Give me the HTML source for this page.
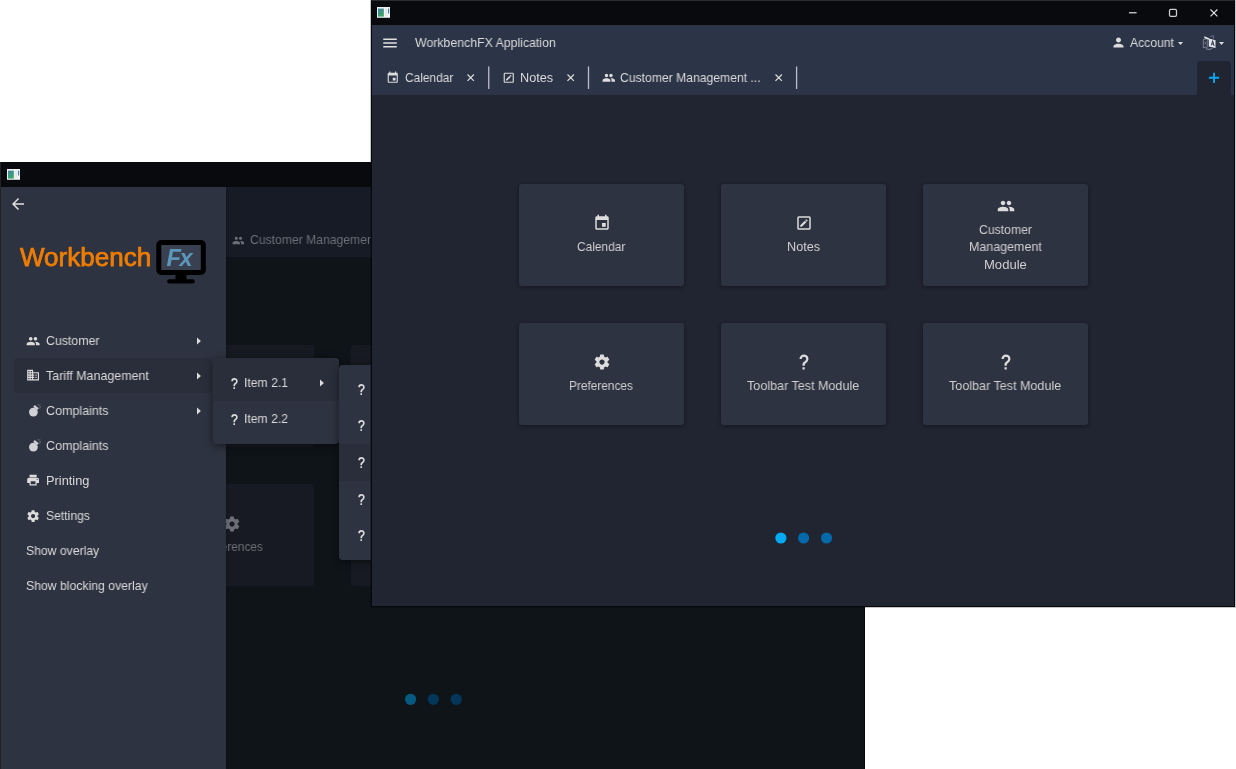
<!DOCTYPE html>
<html><head><meta charset="utf-8"><title>WorkbenchFX</title>
<style>
*{box-sizing:border-box;margin:0;padding:0}
html,body{width:1236px;height:769px;overflow:hidden;background:#fff}
body{position:relative;font-family:"Liberation Sans",sans-serif;font-size:12.4px;color:#d6d6d6}
.a{position:absolute}
.t{position:absolute;white-space:nowrap;line-height:20px;height:20px;will-change:transform;transform-origin:0 0}
svg{position:absolute;display:block}
.tile{position:absolute;width:165px;height:102px;border-radius:3px;background:#2e3341;box-shadow:0 1px 4px rgba(0,0,0,.38)}
.dtile{position:absolute;width:165px;height:102px;border-radius:3px;background:#171a22}
.sep{position:absolute;width:1.400px;top:66.300px;height:22.800px;background:#b3b8c3;border-radius:.7px}
.dot{position:absolute;width:11px;height:11px;border-radius:50%}
</style></head><body>

<!-- WINDOW 2 (back: dimmed + navigation drawer) -->
<div class="a" style="left:0;top:162px;width:865px;height:607px;background:#0f1419;overflow:hidden">
<div class="a" style="left:0;top:-162px;width:1236px;height:769px">
<div class="a" style="left:0px;top:162px;width:865px;height:25px;background:#080a0e;"></div>
<svg style="left:7px;top:169px" width="13.300" height="10.800" viewBox="0 0 13.600 11"><defs><linearGradient id="ag1" x1="0" y1="0" x2=".5" y2="1"><stop offset="0" stop-color="#4a7fb0"/><stop offset=".45" stop-color="#3f9488"/><stop offset="1" stop-color="#3ca468"/></linearGradient></defs><rect width="13.600" height="11" fill="#f3f5f5"/><rect x="1" y="1.600" width="6" height="8.200" fill="url(#ag1)"/><rect x="11.200" y="1.600" width="1.300" height="5" fill="#4a86aa"/><rect x="8.300" y="1.800" width="2.200" height="7.600" fill="#e3e7e7"/></svg>
<div class="a" style="left:0px;top:187px;width:865px;height:70px;background:#161b26;"></div>
<svg style="left:231.5px;top:233.5px" width="12.8" height="12.8" viewBox="0 0 24 24"><path fill="#6c6f75" d="M16 11c1.66 0 2.99-1.34 2.99-3S17.66 5 16 5c-1.66 0-3 1.34-3 3s1.34 3 3 3zm-8 0c1.66 0 2.99-1.34 2.99-3S9.66 5 8 5C6.34 5 5 6.34 5 8s1.34 3 3 3zm0 2c-2.33 0-7 1.17-7 3.5V19h14v-2.5c0-2.33-4.67-3.5-7-3.5zm8 0c-.29 0-.62.02-.97.05 1.16.84 1.97 1.97 1.97 3.45V19h6v-2.5c0-2.33-4.67-3.5-7-3.5z"/></svg>
<span class="t" id="t1" style="left:250.00px;top:230.00px;font-size:12.7px;color:#6c6f75;transform:scaleX(0.9588);">Customer Management ...</span>
<div class="dtile" style="left:148.5px;top:345px"></div>
<div class="dtile" style="left:148.5px;top:484px"></div>
<div class="dtile" style="left:350.5px;top:345px"></div>
<div class="dtile" style="left:350.5px;top:484px"></div>
<div class="dtile" style="left:552.5px;top:345px"></div>
<div class="dtile" style="left:552.5px;top:484px"></div>
<svg style="left:222.5px;top:514.5px" width="18" height="18" viewBox="0 0 24 24"><path fill="#6c6f75" d="M19.43 12.98c.04-.32.07-.64.07-.98s-.03-.66-.07-.98l2.11-1.65c.19-.15.24-.42.12-.64l-2-3.46c-.12-.22-.39-.3-.61-.22l-2.49 1c-.52-.4-1.08-.73-1.69-.98l-.38-2.65C14.46 2.18 14.25 2 14 2h-4c-.25 0-.46.18-.49.42l-.38 2.65c-.61.25-1.17.59-1.69.98l-2.49-1c-.23-.09-.49 0-.61.22l-2 3.46c-.13.22-.07.49.12.64l2.11 1.65c-.04.32-.07.65-.07.98s.03.66.07.98l-2.11 1.65c-.19.15-.24.42-.12.64l2 3.46c.12.22.39.3.61.22l2.49-1c.52.4 1.08.73 1.69.98l.38 2.65c.03.24.24.42.49.42h4c.25 0 .46-.18.49-.42l.38-2.65c.61-.25 1.17-.59 1.69-.98l2.49 1c.23.09.49 0 .61-.22l2-3.46c.12-.22.07-.49-.12-.64l-2.11-1.65zM12 15.5c-1.93 0-3.5-1.57-3.5-3.5s1.57-3.5 3.5-3.5 3.5 1.57 3.5 3.5-1.57 3.5-3.5 3.5z"/></svg>
<span class="t" id="t2" style="left:199.00px;top:537.00px;font-size:12.7px;color:#6c6f75;transform:scaleX(0.9344);">Preferences</span>
<svg style="left:400px;top:690px" width="70" height="20" viewBox="0 0 70 20"><circle cx="10.600" cy="9.300" r="5.600" fill="#065a82"/><circle cx="33.300" cy="9.300" r="5.600" fill="#04365a"/><circle cx="56.250" cy="9.300" r="5.600" fill="#04365a"/></svg>
<div class="a" style="left:0px;top:187px;width:226px;height:582px;background:#2e3341;box-shadow:1px 0 3px rgba(0,0,0,.2)"></div>
<svg style="left:9px;top:195px" width="18" height="18" viewBox="0 0 24 24"><path fill="#e0e0e0" d="M20 11H7.83l5.59-5.59L12 4l-8 8 8 8 1.41-1.41L7.83 13H20v-2z"/></svg>
<span class="t" id="logo" style="left:19.5px;top:236.500px;height:40px;line-height:40px;font-size:26px;letter-spacing:.03px;color:#ef7d00;-webkit-text-stroke:.75px #ef7d00">Workbench</span>
<svg id="mon" style="left:156px;top:239px" width="51" height="46" viewBox="0 0 51 46"><rect x="2.8" y="3.5" width="44.5" height="30" rx="2.5" fill="#39404f" stroke="#000" stroke-width="5"/><rect x="19.5" y="35" width="11" height="6" fill="#000"/><rect x="11.2" y="40.2" width="27.600" height="4.300" rx="2.100" fill="#000"/><text x="10.600" y="27.100" font-family="Liberation Sans, sans-serif" font-style="italic" font-weight="bold" font-size="23.700" fill="#5b95ba" letter-spacing="-1.600">Fx</text></svg>
<div class="a" style="left:14px;top:358px;width:198px;height:35px;background:#2a2e3b;border-radius:3px"></div>
<svg style="left:26.3px;top:334px" width="14.2" height="14.2" viewBox="0 0 24 24"><path fill="#dcdcdc" d="M16 11c1.66 0 2.99-1.34 2.99-3S17.66 5 16 5c-1.66 0-3 1.34-3 3s1.34 3 3 3zm-8 0c1.66 0 2.99-1.34 2.99-3S9.66 5 8 5C6.34 5 5 6.34 5 8s1.34 3 3 3zm0 2c-2.33 0-7 1.17-7 3.5V19h14v-2.5c0-2.33-4.67-3.5-7-3.5zm8 0c-.29 0-.62.02-.97.05 1.16.84 1.97 1.97 1.97 3.45V19h6v-2.5c0-2.33-4.67-3.5-7-3.5z"/></svg>
<span class="t" id="t3" style="left:46.00px;top:331.00px;font-size:12.7px;color:#dadada;transform:scaleX(0.9722);">Customer</span>
<svg style="left:196.5px;top:337.4px" width="4" height="8" viewBox="0 0 4 8"><path d="M0 .6L3.900 4.100 0 7.600z" fill="#dcdcdc"/></svg>
<svg style="left:26.1px;top:367.6px" width="14.2" height="14.2" viewBox="0 0 24 24"><path fill="#dcdcdc" d="M12 7V3H2v18h20V7H12zM6 19H4v-2h2v2zm0-4H4v-2h2v2zm0-4H4V9h2v2zm0-4H4V5h2v2zm4 12H8v-2h2v2zm0-4H8v-2h2v2zm0-4H8V9h2v2zm0-4H8V5h2v2zm10 12h-8v-2h2v-2h-2v-2h2v-2h-2V9h8v10zm-2-8h-2v2h2v-2zm0 4h-2v2h2v-2z"/></svg>
<span class="t" id="t4" style="left:46.00px;top:366.00px;font-size:12.7px;color:#dadada;transform:scaleX(0.9816);">Tariff Management</span>
<svg style="left:196.5px;top:372.4px" width="4" height="8" viewBox="0 0 4 8"><path d="M0 .6L3.900 4.100 0 7.600z" fill="#dcdcdc"/></svg>
<svg style="left:28px;top:403.5px" width="14" height="14" viewBox="0 0 14 14"><circle cx="5.4" cy="8.1" r="4.4" fill="#cfd1d6"/><path d="M6 1.9L10 5.2" stroke="#cfd1d6" stroke-width="2.3" fill="none"/><path d="M11 1.600l.9-1M11.500 2.900h1.500M11.200 3.900l1 .9M10.200 1.200v-1" stroke="#a9adb6" stroke-width=".6" fill="none"/></svg>
<span class="t" id="t5" style="left:46.00px;top:401.00px;font-size:12.7px;color:#dadada;transform:scaleX(0.9865);">Complaints</span>
<svg style="left:196.5px;top:407.4px" width="4" height="8" viewBox="0 0 4 8"><path d="M0 .6L3.900 4.100 0 7.600z" fill="#dcdcdc"/></svg>
<svg style="left:28px;top:438.5px" width="14" height="14" viewBox="0 0 14 14"><circle cx="5.4" cy="8.1" r="4.4" fill="#cfd1d6"/><path d="M6 1.9L10 5.2" stroke="#cfd1d6" stroke-width="2.3" fill="none"/><path d="M11 1.600l.9-1M11.500 2.900h1.500M11.200 3.900l1 .9M10.200 1.200v-1" stroke="#a9adb6" stroke-width=".6" fill="none"/></svg>
<span class="t" id="t6" style="left:46.00px;top:436.00px;font-size:12.7px;color:#dadada;transform:scaleX(0.9865);">Complaints</span>
<svg style="left:26.2px;top:473.2px" width="14.2" height="14.2" viewBox="0 0 24 24"><path fill="#dcdcdc" d="M19 8H5c-1.66 0-3 1.34-3 3v6h4v4h12v-4h4v-6c0-1.66-1.34-3-3-3zm-3 11H8v-5h8v5zm3-7c-.55 0-1-.45-1-1s.45-1 1-1 1 .45 1 1-.45 1-1 1zm-1-9H6v4h12V3z"/></svg>
<span class="t" id="t7" style="left:46.00px;top:471.00px;font-size:12.7px;color:#dadada;transform:scaleX(1.0078);">Printing</span>
<svg style="left:26.2px;top:508.7px" width="14.2" height="14.2" viewBox="0 0 24 24"><path fill="#dcdcdc" d="M19.43 12.98c.04-.32.07-.64.07-.98s-.03-.66-.07-.98l2.11-1.65c.19-.15.24-.42.12-.64l-2-3.46c-.12-.22-.39-.3-.61-.22l-2.49 1c-.52-.4-1.08-.73-1.69-.98l-.38-2.65C14.46 2.18 14.25 2 14 2h-4c-.25 0-.46.18-.49.42l-.38 2.65c-.61.25-1.17.59-1.69.98l-2.49-1c-.23-.09-.49 0-.61.22l-2 3.46c-.13.22-.07.49.12.64l2.11 1.65c-.04.32-.07.65-.07.98s.03.66.07.98l-2.11 1.65c-.19.15-.24.42-.12.64l2 3.46c.12.22.39.3.61.22l2.49-1c.52.4 1.08.73 1.69.98l.38 2.65c.03.24.24.42.49.42h4c.25 0 .46-.18.49-.42l.38-2.65c.61-.25 1.17-.59 1.69-.98l2.49 1c.23.09.49 0 .61-.22l2-3.46c.12-.22.07-.49-.12-.64l-2.11-1.65zM12 15.5c-1.93 0-3.5-1.57-3.5-3.5s1.57-3.5 3.5-3.5 3.5 1.57 3.5 3.5-1.57 3.5-3.5 3.5z"/></svg>
<span class="t" id="t8" style="left:46.00px;top:506.00px;font-size:12.7px;color:#dadada;transform:scaleX(0.9574);">Settings</span>
<span class="t" id="t9" style="left:26.00px;top:541.00px;font-size:12.7px;color:#dadada;transform:scaleX(0.9614);">Show overlay</span>
<span class="t" id="t10" style="left:26.00px;top:576.00px;font-size:12.7px;color:#dadada;transform:scaleX(0.9637);">Show blocking overlay</span>
<div class="a" style="left:213px;top:358px;width:126.300px;height:86px;border-radius:4px;background:#2e3341;box-shadow:0 2px 8px rgba(0,0,0,.5);overflow:hidden"><div class="a" style="left:0;top:0;width:126px;height:43px;background:#2a2e3b"></div></div>
<svg style="left:228px;top:376.5px" width="13" height="13" viewBox="0 0 24 24"><path fill="#dcdcdc" d="M10,19H13V22H10V19M12,2C17.35,2.22 19.68,7.62 16.5,11.67C15.67,12.67 14.33,13.33 13.67,14.17C13,15 13,16 13,17H10C10,15.33 10,13.92 10.67,12.92C11.33,11.92 12.67,11.33 13.5,10.67C15.92,8.43 15.32,5.26 12,5A3,3 0 0,0 9,8H6A6,6 0 0,1 12,2Z"/></svg>
<span class="t" id="t11" style="left:244.00px;top:373.00px;font-size:12.7px;color:#dadada;transform:scaleX(0.9608);">Item 2.1</span>
<svg style="left:319.6px;top:379.2px" width="4" height="8" viewBox="0 0 4 8"><path d="M0 .6L3.900 4.100 0 7.600z" fill="#dcdcdc"/></svg>
<svg style="left:228px;top:413.2px" width="13" height="13" viewBox="0 0 24 24"><path fill="#dcdcdc" d="M10,19H13V22H10V19M12,2C17.35,2.22 19.68,7.62 16.5,11.67C15.67,12.67 14.33,13.33 13.67,14.17C13,15 13,16 13,17H10C10,15.33 10,13.92 10.67,12.92C11.33,11.92 12.67,11.33 13.5,10.67C15.92,8.43 15.32,5.26 12,5A3,3 0 0,0 9,8H6A6,6 0 0,1 12,2Z"/></svg>
<span class="t" id="t12" style="left:244.00px;top:409.00px;font-size:12.7px;color:#dadada;transform:scaleX(0.9606);">Item 2.2</span>
<div class="a" style="left:339.300px;top:364.500px;width:160px;height:195.500px;border-radius:4px;background:#2e3341;box-shadow:0 2px 8px rgba(0,0,0,.5);overflow:hidden"><div class="a" style="left:0;top:79.500px;width:160px;height:36.700px;background:#2a2e3b"></div></div>
<svg style="left:354.7px;top:382.6px" width="13" height="13" viewBox="0 0 24 24"><path fill="#dcdcdc" d="M10,19H13V22H10V19M12,2C17.35,2.22 19.68,7.62 16.5,11.67C15.67,12.67 14.33,13.33 13.67,14.17C13,15 13,16 13,17H10C10,15.33 10,13.92 10.67,12.92C11.33,11.92 12.67,11.33 13.5,10.67C15.92,8.43 15.32,5.26 12,5A3,3 0 0,0 9,8H6A6,6 0 0,1 12,2Z"/></svg>
<svg style="left:354.7px;top:419.3px" width="13" height="13" viewBox="0 0 24 24"><path fill="#dcdcdc" d="M10,19H13V22H10V19M12,2C17.35,2.22 19.68,7.62 16.5,11.67C15.67,12.67 14.33,13.33 13.67,14.17C13,15 13,16 13,17H10C10,15.33 10,13.92 10.67,12.92C11.33,11.92 12.67,11.33 13.5,10.67C15.92,8.43 15.32,5.26 12,5A3,3 0 0,0 9,8H6A6,6 0 0,1 12,2Z"/></svg>
<svg style="left:354.7px;top:456.0px" width="13" height="13" viewBox="0 0 24 24"><path fill="#dcdcdc" d="M10,19H13V22H10V19M12,2C17.35,2.22 19.68,7.62 16.5,11.67C15.67,12.67 14.33,13.33 13.67,14.17C13,15 13,16 13,17H10C10,15.33 10,13.92 10.67,12.92C11.33,11.92 12.67,11.33 13.5,10.67C15.92,8.43 15.32,5.26 12,5A3,3 0 0,0 9,8H6A6,6 0 0,1 12,2Z"/></svg>
<svg style="left:354.7px;top:492.70000000000005px" width="13" height="13" viewBox="0 0 24 24"><path fill="#dcdcdc" d="M10,19H13V22H10V19M12,2C17.35,2.22 19.68,7.62 16.5,11.67C15.67,12.67 14.33,13.33 13.67,14.17C13,15 13,16 13,17H10C10,15.33 10,13.92 10.67,12.92C11.33,11.92 12.67,11.33 13.5,10.67C15.92,8.43 15.32,5.26 12,5A3,3 0 0,0 9,8H6A6,6 0 0,1 12,2Z"/></svg>
<svg style="left:354.7px;top:529.4000000000001px" width="13" height="13" viewBox="0 0 24 24"><path fill="#dcdcdc" d="M10,19H13V22H10V19M12,2C17.35,2.22 19.68,7.62 16.5,11.67C15.67,12.67 14.33,13.33 13.67,14.17C13,15 13,16 13,17H10C10,15.33 10,13.92 10.67,12.92C11.33,11.92 12.67,11.33 13.5,10.67C15.92,8.43 15.32,5.26 12,5A3,3 0 0,0 9,8H6A6,6 0 0,1 12,2Z"/></svg>
</div>
<div class="a" style="left:0;top:0;width:865px;height:607px;border-right:1px solid #06080d;border-left:1px solid #202226"></div>
</div>

<!-- WINDOW 1 (front) -->
<div class="a" style="left:371px;top:0;width:864px;height:607px;background:#212431;box-shadow:0 0 0 1px rgba(0,0,0,.22)">
<div class="a" style="left:-371px;top:0;width:1236px;height:769px">
<div class="a" style="left:371px;top:0px;width:864px;height:25px;background:#080a0e;"></div>
<svg style="left:377px;top:7px" width="13.300" height="10.800" viewBox="0 0 13.600 11"><defs><linearGradient id="ag2" x1="0" y1="0" x2=".5" y2="1"><stop offset="0" stop-color="#4a7fb0"/><stop offset=".45" stop-color="#3f9488"/><stop offset="1" stop-color="#3ca468"/></linearGradient></defs><rect width="13.600" height="11" fill="#f3f5f5"/><rect x="1" y="1.600" width="6" height="8.200" fill="url(#ag2)"/><rect x="11.200" y="1.600" width="1.300" height="5" fill="#4a86aa"/><rect x="8.300" y="1.800" width="2.200" height="7.600" fill="#e3e7e7"/></svg>
<svg style="left:1129px;top:11px" width="8" height="3" viewBox="0 0 8 3"><rect x="0" y="1.100" width="7.600" height="1.300" fill="#cdcdcd"/></svg>
<svg style="left:1168px;top:8px" width="10" height="10" viewBox="0 0 10 10"><rect x="1.500" y="1.400" width="7" height="7" rx="1.300" fill="none" stroke="#d0d0d0" stroke-width="1.250"/></svg>
<svg style="left:1209px;top:8px" width="10" height="10" viewBox="0 0 10 10"><path d="M1.500 1.500L8.400 8.400M8.400 1.500L1.500 8.400" stroke="#e2e2e2" stroke-width="1.100" fill="none"/></svg>
<div class="a" style="left:371px;top:25px;width:864px;height:70px;background:#2c3548;"></div>
<svg style="left:380.6px;top:33.9px" width="18" height="18" viewBox="0 0 24 24"><path fill="#e0e0e0" d="M3 18h18v-2H3v2zm0-5h18v-2H3v2zm0-7v2h18V6H3z"/></svg>
<span class="t" id="t13" style="left:415.00px;top:33.00px;font-size:12.7px;color:#dadada;transform:scaleX(0.9706);">WorkbenchFX Application</span>
<svg style="left:1111.4px;top:35.4px" width="15" height="15" viewBox="0 0 24 24"><path fill="#dcdcdc" d="M12 12c2.21 0 4-1.79 4-4s-1.79-4-4-4-4 1.79-4 4 1.79 4 4 4zm0 2c-2.67 0-8 1.34-8 4v2h16v-2c0-2.66-5.33-4-8-4z"/></svg>
<span class="t" id="t14" style="left:1130.00px;top:33.00px;font-size:12.7px;color:#dadada;transform:scaleX(0.9591);">Account</span>
<svg style="left:1178.3px;top:41.5px" width="5" height="3" viewBox="0 0 5 3"><path d="M0 0h5L2.500 3z" fill="#dcdcdc"/></svg>
<svg style="left:1219.2px;top:41.5px" width="5" height="3" viewBox="0 0 5 3"><path d="M0 0h5L2.500 3z" fill="#dcdcdc"/></svg>
<svg id="lang" style="left:1202px;top:35px" width="15" height="16" viewBox="0 0 15 16"><path d="M1.300 4.600L5.800 3.600V11.800L1.300 12.800z" fill="none" stroke="#8d94a2" stroke-width="0.8"/><path d="M2.300 1.300L7.200 3.200v1.600L2.300 3.300z" fill="#e2e5ea"/><path d="M6.900 3.500L13.500 5.200v7.900L6.900 11.400z" fill="#e2e5ea"/><path d="M9.500 10.300l1.100-4.600l1.500 5.300M9.900 8.700l2 .5" stroke="#2c3548" stroke-width="1" fill="none"/><path d="M8.200 1.500l3.300-.8v2.800" fill="none" stroke="#7f8796" stroke-width="0.7"/><path d="M3.800 13.500c1.800 1.300 4.600 1.200 6.600-.3" fill="none" stroke="#9aa1ae" stroke-width="0.9"/><path d="M2.800 6.600l1.700 3.600M4.500 6.400l-1.800 2.800" stroke="#7f8796" stroke-width="0.7" fill="none"/></svg>
<svg style="left:386.3px;top:70.9px" width="13.5" height="13.5" viewBox="0 0 24 24"><path fill="#dcdcdc" d="M17 12h-5v5h5v-5zM16 1v2H8V1H6v2H5c-1.11 0-1.99.9-1.99 2L3 19c0 1.1.89 2 2 2h14c1.1 0 2-.9 2-2V5c0-1.1-.9-2-2-2h-1V1h-2zm3 18H5V8h14v11z"/></svg>
<span class="t" id="t15" style="left:405.00px;top:68.00px;font-size:12.7px;color:#dadada;transform:scaleX(0.9384);">Calendar</span>
<svg style="left:467px;top:74px" width="8" height="8" viewBox="0 0 8 8"><path d="M.5.5l6.400 6.400M6.900.5L.5 6.900" stroke="#e0e0e0" stroke-width="1.100" fill="none"/></svg>
<svg style="left:486px;top:65px" width="6" height="26" viewBox="0 0 6 26"><rect x="2.10" y="1.300" width="1.300" height="22.800" rx=".6" fill="#b9bdc7"/></svg>
<svg style="left:501.8px;top:70.9px" width="13.5" height="13.5" viewBox="0 0 24 24"><path fill="#dcdcdc" d="M19,19V5H5V19H19M19,3A2,2 0 0,1 21,5V19C21,20.11 20.1,21 19,21H5A2,2 0 0,1 3,19V5A2,2 0 0,1 5,3H19M16.7,9.35L15.7,10.35L13.65,8.3L14.65,7.3C14.86,7.08 15.21,7.08 15.42,7.3L16.7,8.58C16.92,8.79 16.92,9.14 16.7,9.35M7,14.94L13.06,8.88L15.12,10.94L9.06,17H7V14.94Z"/></svg>
<span class="t" id="t16" style="left:520.00px;top:68.00px;font-size:12.7px;color:#dadada;transform:scaleX(0.9917);">Notes</span>
<svg style="left:566.8px;top:74px" width="8" height="8" viewBox="0 0 8 8"><path d="M.5.5l6.400 6.400M6.900.5L.5 6.900" stroke="#e0e0e0" stroke-width="1.100" fill="none"/></svg>
<svg style="left:586px;top:65px" width="6" height="26" viewBox="0 0 6 26"><rect x="1.85" y="1.300" width="1.300" height="22.800" rx=".6" fill="#b9bdc7"/></svg>
<svg style="left:601.6px;top:70.9px" width="13.5" height="13.5" viewBox="0 0 24 24"><path fill="#dcdcdc" d="M16 11c1.66 0 2.99-1.34 2.99-3S17.66 5 16 5c-1.66 0-3 1.34-3 3s1.34 3 3 3zm-8 0c1.66 0 2.99-1.34 2.99-3S9.66 5 8 5C6.34 5 5 6.34 5 8s1.34 3 3 3zm0 2c-2.33 0-7 1.17-7 3.5V19h14v-2.5c0-2.33-4.67-3.5-7-3.5zm8 0c-.29 0-.62.02-.97.05 1.16.84 1.97 1.97 1.97 3.45V19h6v-2.5c0-2.33-4.67-3.5-7-3.5z"/></svg>
<span class="t" id="t17" style="left:620.00px;top:68.00px;font-size:12.7px;color:#dadada;transform:scaleX(0.9588);">Customer Management ...</span>
<svg style="left:775px;top:74px" width="8" height="8" viewBox="0 0 8 8"><path d="M.5.5l6.400 6.400M6.900.5L.5 6.900" stroke="#e0e0e0" stroke-width="1.100" fill="none"/></svg>
<svg style="left:794px;top:65px" width="6" height="26" viewBox="0 0 6 26"><rect x="1.95" y="1.300" width="1.300" height="22.800" rx=".6" fill="#b9bdc7"/></svg>
<div class="a" style="left:1197px;top:60.6px;width:34.2px;height:34.4px;background:#212431;border-radius:4px 4px 0 0"></div>
<svg style="left:1208px;top:72px" width="12" height="12" viewBox="0 0 12 12"><path d="M6.050 .7v10.200M.95 5.800h10.200" stroke="#08a6ee" stroke-width="1.900" fill="none"/></svg>
<div class="tile" style="left:519px;top:184px"></div>
<div class="tile" style="left:519px;top:323px"></div>
<div class="tile" style="left:721px;top:184px"></div>
<div class="tile" style="left:721px;top:323px"></div>
<div class="tile" style="left:923px;top:184px"></div>
<div class="tile" style="left:923px;top:323px"></div>
<svg style="left:593px;top:214.2px" width="18" height="18" viewBox="0 0 24 24"><path fill="#dcdcdc" d="M17 12h-5v5h5v-5zM16 1v2H8V1H6v2H5c-1.11 0-1.99.9-1.99 2L3 19c0 1.1.89 2 2 2h14c1.1 0 2-.9 2-2V5c0-1.1-.9-2-2-2h-1V1h-2zm3 18H5V8h14v11z"/></svg>
<span class="t" id="t18" style="left:577.00px;top:237.00px;font-size:12.7px;color:#cfcfcf;transform:scaleX(0.9383);">Calendar</span>
<svg style="left:795px;top:214.4px" width="18" height="18" viewBox="0 0 24 24"><path fill="#dcdcdc" d="M19,19V5H5V19H19M19,3A2,2 0 0,1 21,5V19C21,20.11 20.1,21 19,21H5A2,2 0 0,1 3,19V5A2,2 0 0,1 5,3H19M16.7,9.35L15.7,10.35L13.65,8.3L14.65,7.3C14.86,7.08 15.21,7.08 15.42,7.3L16.7,8.58C16.92,8.79 16.92,9.14 16.7,9.35M7,14.94L13.06,8.88L15.12,10.94L9.06,17H7V14.94Z"/></svg>
<span class="t" id="t19" style="left:787.00px;top:237.00px;font-size:12.7px;color:#cfcfcf;transform:scaleX(0.9917);">Notes</span>
<svg style="left:997px;top:196.8px" width="18" height="18" viewBox="0 0 24 24"><path fill="#dcdcdc" d="M16 11c1.66 0 2.99-1.34 2.99-3S17.66 5 16 5c-1.66 0-3 1.34-3 3s1.34 3 3 3zm-8 0c1.66 0 2.99-1.34 2.99-3S9.66 5 8 5C6.34 5 5 6.34 5 8s1.34 3 3 3zm0 2c-2.33 0-7 1.17-7 3.5V19h14v-2.5c0-2.33-4.67-3.5-7-3.5zm8 0c-.29 0-.62.02-.97.05 1.16.84 1.97 1.97 1.97 3.45V19h6v-2.5c0-2.33-4.67-3.5-7-3.5z"/></svg>
<span class="t" id="t20" style="left:979.00px;top:220.00px;font-size:12.7px;color:#cfcfcf;transform:scaleX(0.9634);">Customer</span>
<span class="t" id="t21" style="left:969.00px;top:237.00px;font-size:12.7px;color:#cfcfcf;transform:scaleX(0.9821);">Management</span>
<span class="t" id="t22" style="left:984.00px;top:255.00px;font-size:12.7px;color:#cfcfcf;transform:scaleX(1.0285);">Module</span>
<svg style="left:593px;top:353px" width="18" height="18" viewBox="0 0 24 24"><path fill="#dcdcdc" d="M19.43 12.98c.04-.32.07-.64.07-.98s-.03-.66-.07-.98l2.11-1.65c.19-.15.24-.42.12-.64l-2-3.46c-.12-.22-.39-.3-.61-.22l-2.49 1c-.52-.4-1.08-.73-1.69-.98l-.38-2.65C14.46 2.18 14.25 2 14 2h-4c-.25 0-.46.18-.49.42l-.38 2.65c-.61.25-1.17.59-1.69.98l-2.49-1c-.23-.09-.49 0-.61.22l-2 3.46c-.13.22-.07.49.12.64l2.11 1.65c-.04.32-.07.65-.07.98s.03.66.07.98l-2.11 1.65c-.19.15-.24.42-.12.64l2 3.46c.12.22.39.3.61.22l2.49-1c.52.4 1.08.73 1.69.98l.38 2.65c.03.24.24.42.49.42h4c.25 0 .46-.18.49-.42l.38-2.65c.61-.25 1.17-.59 1.69-.98l2.49 1c.23.09.49 0 .61-.22l2-3.46c.12-.22.07-.49-.12-.64l-2.11-1.65zM12 15.5c-1.93 0-3.5-1.57-3.5-3.5s1.57-3.5 3.5-3.5 3.5 1.57 3.5 3.5-1.57 3.5-3.5 3.5z"/></svg>
<span class="t" id="t23" style="left:569.00px;top:376.00px;font-size:12.7px;color:#cfcfcf;transform:scaleX(0.9344);">Preferences</span>
<svg style="left:795.3px;top:353px" width="18" height="18" viewBox="0 0 24 24"><path fill="#dcdcdc" d="M10,19H13V22H10V19M12,2C17.35,2.22 19.68,7.62 16.5,11.67C15.67,12.67 14.33,13.33 13.67,14.17C13,15 13,16 13,17H10C10,15.33 10,13.92 10.67,12.92C11.33,11.92 12.67,11.33 13.5,10.67C15.92,8.43 15.32,5.26 12,5A3,3 0 0,0 9,8H6A6,6 0 0,1 12,2Z"/></svg>
<span class="t" id="t24" style="left:747.00px;top:376.00px;font-size:12.7px;color:#cfcfcf;transform:scaleX(0.9902);">Toolbar Test Module</span>
<svg style="left:997.3px;top:353px" width="18" height="18" viewBox="0 0 24 24"><path fill="#dcdcdc" d="M10,19H13V22H10V19M12,2C17.35,2.22 19.68,7.62 16.5,11.67C15.67,12.67 14.33,13.33 13.67,14.17C13,15 13,16 13,17H10C10,15.33 10,13.92 10.67,12.92C11.33,11.92 12.67,11.33 13.5,10.67C15.92,8.43 15.32,5.26 12,5A3,3 0 0,0 9,8H6A6,6 0 0,1 12,2Z"/></svg>
<span class="t" id="t25" style="left:949.00px;top:376.00px;font-size:12.7px;color:#cfcfcf;transform:scaleX(0.9902);">Toolbar Test Module</span>
<svg style="left:770px;top:528px" width="70" height="20" viewBox="0 0 70 20"><circle cx="10.900" cy="10" r="5.600" fill="#04a9f4"/><circle cx="33.600" cy="10" r="5.600" fill="#0568a9"/><circle cx="56.550" cy="10" r="5.600" fill="#0568a9"/></svg>
</div>
<div class="a" style="left:0;top:0;width:864px;height:607px;border:1px solid #05070d;border-top:1px solid #2b2e31"></div>
</div>
</body></html>
